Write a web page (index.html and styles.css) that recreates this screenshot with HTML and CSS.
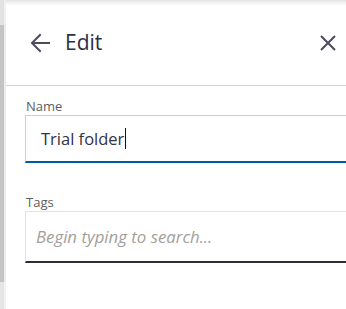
FILE: index.html
```html
<!DOCTYPE html>
<html>
<head>
<meta charset="utf-8">
<link rel="stylesheet" href="styles.css">
</head>
<body>
<div class="page">
  <div class="rail">
    <div class="rail-top"></div>
    <div class="rail-thumb"></div>
    <div class="rail-bottom"></div>
  </div>
  <div class="panel">
    <div class="header">
      <svg class="back" width="20" height="20" viewBox="0 0 20 20" fill="none" stroke="currentColor" stroke-width="2" stroke-linecap="square">
        <path d="M19 10H2.5M10 2L2 10l8 8"/>
      </svg>
      <h1 class="title">Edit</h1>
      <svg class="close" width="16" height="16" viewBox="0 0 16 16" fill="none" stroke="currentColor" stroke-width="2">
        <path d="M1 1L15 15M15 1L1 15"/>
      </svg>
    </div>
    <div class="form">
      <label class="label">Name</label>
      <div class="input input-active"><span class="value">Trial folder</span><span class="caret"></span></div>
      <label class="label label-tags">Tags</label>
      <div class="input input-tags"><span class="placeholder">Begin typing to search...</span></div>
    </div>
  </div>
</div>
</body>
</html>
```
FILE: styles.css
```css
html, body { margin: 0; padding: 0; background: #fff; }
body { font-family: "Open Sans", "Noto Sans", sans-serif; width: 346px; height: 309px; overflow: hidden; }
.page { display: flex; height: 309px; }
.rail { width: 6px; display: flex; flex-direction: column; background: #ececec; }
.rail-top { height: 25px; background: linear-gradient(to right, #e2e2e2 0 4px, #f0f0f0 4px); }
.rail-thumb { height: 257px; background: linear-gradient(to right, #c4c4c4 0 4px, #ececec 4px); }
.rail-bottom { flex: 1; background: linear-gradient(to right, #e6e6e6 0 4px, #f2f2f2 4px); }
.panel { flex: 1; background: linear-gradient(to bottom, #e2e2e2 0, #f4f4f4 3px, #fff 6px); }
.header { height: 86px; border-bottom: 1px solid #d3d2d8; display: flex; align-items: center; padding-left: 24px; padding-right: 10px; box-sizing: border-box; }
.back { color: #4c4c5e; flex: none; }
.title { margin: 0 0 0 15px; font-size: 21px; font-weight: 400; color: #2e2e44; flex: 1; line-height: 1; }
.close { color: #4c4c5e; flex: none; }
.form { padding: 12px 0 0 19px; }
.label { display: block; font-size: 13px; line-height: 17px; color: #605e5c; margin-left: 1px; margin-bottom: 0; }
.label-tags { margin-top: 31px; }
.input { display: flex; align-items: center; box-sizing: border-box; border-top: 1px solid #cfcfcf; border-left: 1px solid #cfcfcf; }
.input-active { height: 48px; border-bottom: 2px solid #005a9e; padding-left: 15px; }
.value { font-size: 16.5px; color: #333340; }
.caret { width: 1px; height: 21px; background: #111; margin-left: 1px; }
.input-tags { height: 52px; border-top-color: #e1e1e6; border-left-color: #e1e1e6; border-bottom: 2px solid #2c2c3c; padding-left: 10px; }
.placeholder { font-size: 16.8px; font-style: italic; color: #a19f9d; }
```
